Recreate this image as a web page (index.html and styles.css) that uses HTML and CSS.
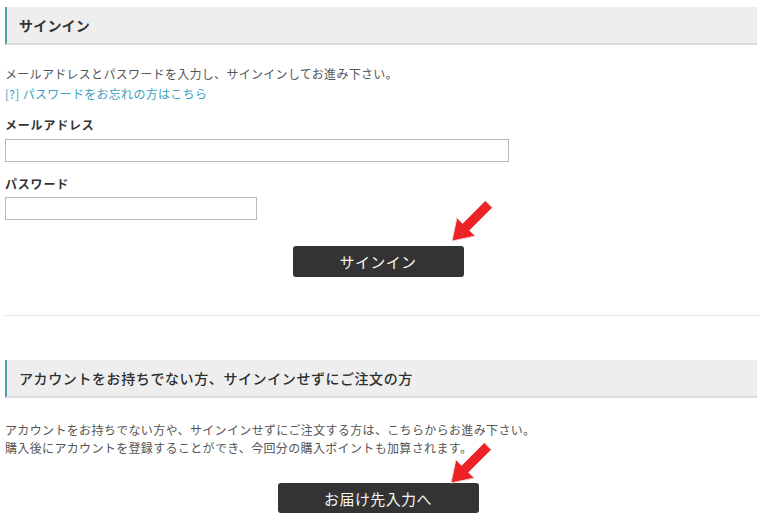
FILE: index.html
```html
<!DOCTYPE html>
<html lang="ja">
<head>
<meta charset="utf-8">
<link rel="stylesheet" href="styles.css">
</head>
<body>
<div class="page">
  <section class="block">
    <h2 class="head head-signin">サインイン</h2>
    <p class="lead">メールアドレスとパスワードを入力し、サインインしてお進み下さい。<br><a class="link" href="#">[?] パスワードをお忘れの方はこちら</a></p>
    <label class="label label-mail">メールアドレス</label>
    <input class="field field-mail" type="text">
    <label class="label label-pass">パスワード</label>
    <input class="field field-pass" type="password">
    <div class="btn-row btn-row-1">
      <button class="btn btn-signin">サインイン<svg class="arrow" viewBox="0 0 46 44"><path d="M3 41 L26.3 36.1 L20.6 30.4 L43.3 7.7 L36.3 0.7 L13.6 23.4 L7.9 17.7 Z" fill="#ec2227" stroke="#f8d0d0" stroke-width="1" stroke-linejoin="round"/></svg></button>
    </div>
  </section>
  <hr class="rule">
  <section class="block">
    <h2 class="head head-guest">アカウントをお持ちでない方、サインインせずにご注文の方</h2>
    <p class="lead lead-guest">アカウントをお持ちでない方や、サインインせずにご注文する方は、こちらからお進み下さい。<br>購入後にアカウントを登録することができ、今回分の購入ポイントも加算されます。</p>
    <div class="btn-row btn-row-2">
      <button class="btn btn-guest">お届け先入力へ<svg class="arrow" viewBox="0 0 46 44"><path d="M3 41 L26.3 36.1 L20.6 30.4 L43.3 7.7 L36.3 0.7 L13.6 23.4 L7.9 17.7 Z" fill="#ec2227" stroke="#f8d0d0" stroke-width="1" stroke-linejoin="round"/></svg></button>
    </div>
  </section>
</div>
</body>
</html>
```
FILE: styles.css
```css
* { box-sizing: border-box; }
html, body { margin: 0; padding: 0; background: #fff; }
body {
  font-family: "Noto Sans CJK JP", "Noto Sans", sans-serif;
  color: #555;
  width: 768px;
  height: 518px;
  overflow: hidden;
}
.page { padding: 7px 8px 0 5px; }
.block { display: flex; flex-direction: column; align-items: flex-start; }
.head {
  align-self: stretch;
  margin: 0 3px 0 0;
  height: 38px;
  background: #eeeeee;
  border-left: 2px solid #4aa3ad;
  border-bottom: 2px solid #dcdcdc;
  padding: 0 0 0 12px;
  display: flex;
  align-items: center;
  font-size: 14px;
  font-weight: bold;
  color: #333;
  letter-spacing: 0.2px;
}
.head-guest { font-weight: 500; letter-spacing: 0.6px; color: #2e2e2e; }
.lead {
  margin: 19px 0 0 0;
  font-size: 12px;
  line-height: 20px;
  letter-spacing: 0.3px;
}
.link { color: #3c9fc0; text-decoration: none; }
.lead-guest { margin-top: 23px; line-height: 18px; letter-spacing: 0.35px; }
.label {
  display: block;
  font-size: 12px;
  font-weight: bold;
  color: #333;
  line-height: 20px;
  letter-spacing: 0.8px;
}
.label-mail { margin-top: 11px; }
.label-pass { margin-top: 12px; }
.field {
  display: block;
  height: 23px;
  border: 1px solid #b9b9b9;
  background: #fff;
  padding: 0 4px;
  margin: 4px 0 0 0;
}
.field-mail { width: 504px; }
.field-pass { width: 252px; margin-top: 3px; }
.btn-row {
  align-self: stretch;
  display: flex;
  justify-content: center;
  margin-right: 9px;
}
.btn-row-1 { margin-top: 26px; }
.btn-row-2 { margin-top: 26px; }
.btn {
  position: relative;
  background: #333;
  color: #f4f4f4;
  border: 0;
  border-radius: 3px;
  font-family: inherit;
  font-size: 15px;
  letter-spacing: 0.4px;
  padding: 0;
}
.btn-signin { width: 171px; height: 31px; }
.btn-guest { width: 201px; height: 30px; }
.arrow {
  position: absolute;
  width: 46px;
  height: 44px;
  left: 156px;
  top: -46px;
}
.btn-guest .arrow { left: 170px; top: -41px; }
.rule {
  border: 0;
  border-top: 1px solid #e3e3e3;
  margin: 38px 0 44px 0;
  height: 0;
}
```
